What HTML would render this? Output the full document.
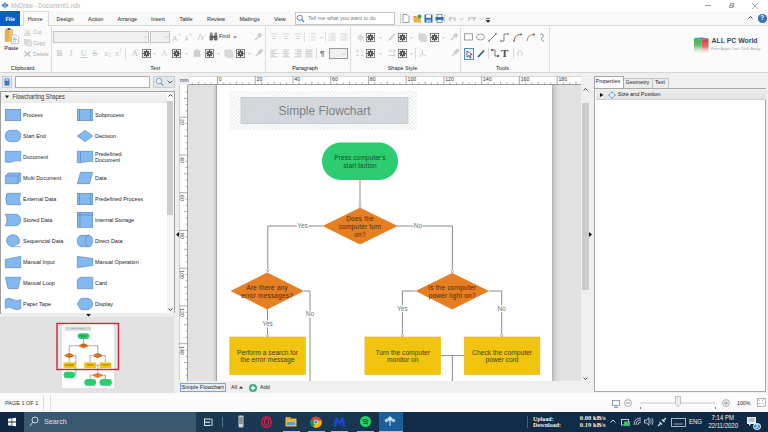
<!DOCTYPE html>
<html><head><meta charset="utf-8">
<style>
*{margin:0;padding:0;box-sizing:border-box}
html,body{width:768px;height:432px;overflow:hidden;background:#efefef;font-family:"Liberation Sans",sans-serif;color:#333;position:relative}
.a{position:absolute}
.t{position:absolute;white-space:nowrap;line-height:1}
svg{overflow:visible}
</style></head><body>
<div class="a" style="left:0px;top:0px;width:768px;height:11px;background:#fff"></div>
<svg class="a" style="left:1px;top:1px;" width="9" height="10" viewBox="0 0 9 10"><path d="M4 1.2 L6.2 3.4 L4 5.6 L1.8 3.4Z" fill="#4a7fb4"/><circle cx="2" cy="4.3" r="1.3" fill="#4a80b6"/><circle cx="6" cy="4.3" r="1.3" fill="#4a80b6"/><circle cx="3.2" cy="5.8" r="0.9" fill="#5a8cc0"/><circle cx="4.8" cy="5.8" r="0.9" fill="#5a8cc0"/><circle cx="4" cy="4" r="1" fill="#9cc8ee"/><rect x="3.6" y="6.5" width="0.8" height="2.6" fill="#b8c8d8"/></svg>
<div class="t" style="left:11px;top:2.60px;font-size:6px;color:#b4b4b4;font-weight:normal;transform:scaleY(1.12);transform-origin:0 60%;">MyDraw - Document1.ndx</div>
<div class="a" style="left:705px;top:4.6px;width:6px;height:0.7px;background:#9a9a9a"></div>
<div class="a" style="left:730.2px;top:3.3px;width:3.8px;height:3.8px;border:0.7px solid #9a9a9a"></div>
<div class="a" style="left:729px;top:4.5px;width:3.8px;height:3.8px;border:0.7px solid #9a9a9a;background:#fff"></div>
<svg class="a" style="left:752px;top:3px;" width="6" height="6" viewBox="0 0 6 6"><path d="M0 0L6 6M6 0L0 6" stroke="#8a8a8a" stroke-width="0.7"/></svg>
<div class="a" style="left:0px;top:11px;width:768px;height:14px;background:#f8f8f8"></div>
<div class="a" style="left:0px;top:25px;width:768px;height:1px;background:#d9d9d9"></div>
<div class="a" style="left:0px;top:11px;width:20px;height:15px;background:#0a5ec8"></div>
<div class="t" style="left:5.5px;top:16.65px;font-size:5.5px;color:#fff;font-weight:bold;transform:scaleY(1.12);transform-origin:0 60%;">File</div>
<div class="a" style="left:23px;top:11px;width:26px;height:15px;background:#fbfbfb;border:1px solid #d9d9d9;border-bottom:none"></div>
<div class="t" style="left:27.8px;top:16.85px;font-size:5.5px;color:#1e1e1e;font-weight:normal;transform:scaleY(1.12);transform-origin:0 60%;">Home</div>
<div class="t" style="left:56.5px;top:16.85px;font-size:5.5px;color:#1e1e1e;font-weight:normal;transform:scaleY(1.12);transform-origin:0 60%;">Design</div>
<div class="t" style="left:88px;top:16.85px;font-size:5.5px;color:#1e1e1e;font-weight:normal;transform:scaleY(1.12);transform-origin:0 60%;">Action</div>
<div class="t" style="left:117.5px;top:16.85px;font-size:5.5px;color:#1e1e1e;font-weight:normal;transform:scaleY(1.12);transform-origin:0 60%;">Arrange</div>
<div class="t" style="left:151px;top:16.85px;font-size:5.5px;color:#1e1e1e;font-weight:normal;transform:scaleY(1.12);transform-origin:0 60%;">Insert</div>
<div class="t" style="left:179.5px;top:16.85px;font-size:5.5px;color:#1e1e1e;font-weight:normal;transform:scaleY(1.12);transform-origin:0 60%;">Table</div>
<div class="t" style="left:207px;top:16.85px;font-size:5.5px;color:#1e1e1e;font-weight:normal;transform:scaleY(1.12);transform-origin:0 60%;">Review</div>
<div class="t" style="left:239.5px;top:16.85px;font-size:5.5px;color:#1e1e1e;font-weight:normal;transform:scaleY(1.12);transform-origin:0 60%;">Mailings</div>
<div class="t" style="left:274px;top:16.85px;font-size:5.5px;color:#1e1e1e;font-weight:normal;transform:scaleY(1.12);transform-origin:0 60%;">View</div>
<div class="a" style="left:295px;top:12px;width:100px;height:13px;background:#fff;border:1px solid #c6c6c6"></div>
<svg class="a" style="left:296px;top:14px;" width="9" height="9" viewBox="0 0 9 9"><circle cx="3.8" cy="3.8" r="2.6" fill="none" stroke="#4a7aa8" stroke-width="0.9"/><path d="M5.7 5.7 L8 8" stroke="#4a7aa8" stroke-width="1.1"/></svg>
<div class="t" style="left:308px;top:16.25px;font-size:5.5px;color:#7a7a7a;font-weight:normal;transform:scaleY(1.12);transform-origin:0 60%;">Tell me what you want to do</div>
<div class="a" style="left:399.5px;top:14px;width:0.7px;height:9px;background:#ccc"></div>
<div class="a" style="left:444px;top:14px;width:0.7px;height:9px;background:#ccc"></div>
<svg class="a" style="left:402px;top:14px;" width="8" height="9" viewBox="0 0 8 9"><path d="M1 0.5H5L7 2.5V8.5H1Z" fill="#fff" stroke="#777" stroke-width="0.7"/></svg>
<svg class="a" style="left:413px;top:14px;" width="9" height="9" viewBox="0 0 9 9"><rect x="0.5" y="3" width="7.5" height="5.5" fill="#e8b44a"/><rect x="0.5" y="2" width="3" height="1.5" fill="#d89a30"/><circle cx="6.5" cy="2.5" r="2" fill="#3aa070"/></svg>
<svg class="a" style="left:424px;top:14px;" width="9" height="9" viewBox="0 0 9 9"><rect x="0.5" y="0.5" width="8" height="8" fill="#2d6cb4"/><rect x="2" y="0.8" width="5" height="3" fill="#fff"/><rect x="2.2" y="5.5" width="4.6" height="3" fill="#a9c6e6"/></svg>
<svg class="a" style="left:435px;top:14px;" width="9" height="9" viewBox="0 0 9 9"><rect x="2" y="0.5" width="5" height="3" fill="#fff" stroke="#2d6cb4" stroke-width="0.7"/><rect x="0.5" y="3" width="8" height="3.5" fill="#2d6cb4"/><rect x="2" y="5.5" width="5" height="3" fill="#fff" stroke="#2d6cb4" stroke-width="0.7"/></svg>
<svg class="a" style="left:448px;top:15px;" width="9" height="8" viewBox="0 0 9 8"><path d="M2 6 V3 H7 V6" fill="none" stroke="#bbb" stroke-width="1.2"/><path d="M0.5 3.5 L2 1.5 L3.5 3.5" fill="#bbb"/></svg>
<svg class="a" style="left:459px;top:17px;" width="5" height="4" viewBox="0 0 5 4"><path d="M0.5 1 L2.5 3 L4.5 1" fill="none" stroke="#bbb" stroke-width="0.8"/></svg>
<svg class="a" style="left:468px;top:15px;" width="9" height="8" viewBox="0 0 9 8"><path d="M1 6 V3 H6 V6" fill="none" stroke="#bbb" stroke-width="1.2"/><path d="M5 3.5 L7 1.5 L8.5 3.5" fill="#bbb"/></svg>
<svg class="a" style="left:479px;top:17px;" width="5" height="4" viewBox="0 0 5 4"><path d="M0.5 1 L2.5 3 L4.5 1" fill="none" stroke="#bbb" stroke-width="0.8"/></svg>
<svg class="a" style="left:485px;top:18px;" width="6" height="6" viewBox="0 0 6 6"><rect x="1" y="0" width="4" height="0.8" fill="#444"/><path d="M0.5 2 H5.5 L3 5Z" fill="#333"/></svg>
<svg class="a" style="left:748px;top:16px;" width="5" height="3" viewBox="0 0 5 3"><path d="M0.5 2.5 L2.5 0.5 L4.5 2.5" fill="none" stroke="#333" stroke-width="0.9"/></svg>
<div class="a" style="left:758px;top:14.3px;width:8.5px;height:8.5px;border-radius:50%;background:#3a72b0"></div>
<div class="t" style="left:662.3px;width:200px;text-align:center;top:15.35px;font-size:6.5px;color:#fff;font-weight:bold;">?</div>
<div class="a" style="left:0px;top:26px;width:768px;height:46px;background:#fbfbfb"></div>
<div class="a" style="left:0px;top:72px;width:768px;height:1px;background:#d6d6d6"></div>
<div class="a" style="left:51px;top:27px;width:0.8px;height:44.5px;background:#dcdcdc"></div>
<div class="a" style="left:265px;top:27px;width:0.8px;height:44.5px;background:#dcdcdc"></div>
<div class="a" style="left:350px;top:27px;width:0.8px;height:44.5px;background:#dcdcdc"></div>
<div class="a" style="left:460px;top:27px;width:0.8px;height:44.5px;background:#dcdcdc"></div>
<div class="a" style="left:549px;top:27px;width:0.8px;height:44.5px;background:#dcdcdc"></div>
<div class="t" style="left:-77.4px;width:200px;text-align:center;top:66.05px;font-size:5.5px;color:#1a1a1a;font-weight:normal;transform:scaleY(1.12);transform-origin:0 60%;">Clipboard</div>
<div class="t" style="left:55.30000000000001px;width:200px;text-align:center;top:66.05px;font-size:5.5px;color:#1a1a1a;font-weight:normal;transform:scaleY(1.12);transform-origin:0 60%;">Text</div>
<div class="t" style="left:205px;width:200px;text-align:center;top:66.05px;font-size:5.5px;color:#1a1a1a;font-weight:normal;transform:scaleY(1.12);transform-origin:0 60%;">Paragraph</div>
<div class="t" style="left:302.5px;width:200px;text-align:center;top:66.05px;font-size:5.5px;color:#1a1a1a;font-weight:normal;transform:scaleY(1.12);transform-origin:0 60%;">Shape Style</div>
<div class="t" style="left:402.5px;width:200px;text-align:center;top:66.05px;font-size:5.5px;color:#1a1a1a;font-weight:normal;transform:scaleY(1.12);transform-origin:0 60%;">Tools</div>
<svg class="a" style="left:4px;top:28px;" width="16" height="17" viewBox="0 0 16 17"><rect x="0.8" y="1.2" width="8" height="12.5" fill="#e6ae48"/><rect x="5" y="1.2" width="3.8" height="12.5" fill="#f0c470"/><rect x="3.3" y="0" width="3.2" height="2" rx="0.8" fill="#555"/><path d="M7.4 7 H12.4 L14.7 9.3 V15.5 H7.4Z" fill="#fff" stroke="#8a94a4" stroke-width="0.6"/><path d="M8.8 10H12.5M8.8 11.6H13M8.8 13.2H12" stroke="#6a9ad0" stroke-width="0.7"/></svg>
<div class="t" style="left:-88.7px;width:200px;text-align:center;top:45.85px;font-size:5.5px;color:#111;font-weight:normal;transform:scaleY(1.12);transform-origin:0 60%;">Paste</div>
<svg class="a" style="left:24px;top:29px;" width="7" height="7" viewBox="0 0 7 7"><path d="M1 0.5 L5 5 M6 0.5 L2 5" stroke="#bbb" stroke-width="0.8"/><circle cx="1.8" cy="5.5" r="1.2" fill="none" stroke="#bbb" stroke-width="0.7"/><circle cx="5.2" cy="5.5" r="1.2" fill="none" stroke="#bbb" stroke-width="0.7"/></svg>
<div class="t" style="left:33px;top:30.05px;font-size:5.5px;color:#a8a8a8;font-weight:normal;transform:scaleY(1.12);transform-origin:0 60%;">Cut</div>
<svg class="a" style="left:24px;top:39px;" width="8" height="7" viewBox="0 0 8 7"><rect x="0.5" y="0.5" width="5" height="5" fill="#ddd" stroke="#c8c8c8" stroke-width="0.6"/><rect x="2.5" y="2" width="5" height="5" fill="#e4e4e4" stroke="#c8c8c8" stroke-width="0.6"/></svg>
<div class="t" style="left:33px;top:40.95px;font-size:5.5px;color:#a8a8a8;font-weight:normal;transform:scaleY(1.12);transform-origin:0 60%;">Copy</div>
<svg class="a" style="left:24px;top:51px;" width="7" height="6" viewBox="0 0 7 6"><path d="M0.5 0.5 L6.5 5.5 M6.5 0.5 L0.5 5.5" stroke="#bbb" stroke-width="1.1"/></svg>
<div class="t" style="left:33px;top:51.95px;font-size:5.5px;color:#a8a8a8;font-weight:normal;transform:scaleY(1.12);transform-origin:0 60%;">Delete</div>
<div class="a" style="left:53px;top:31px;width:96px;height:12px;background:#f0f0f0;border:1px solid #c4c4c4"></div>
<svg class="a" style="left:143px;top:35px;" width="5" height="4" viewBox="0 0 5 4"><path d="M0.5 0.8 L2.5 2.8 L4.5 0.8" fill="none" stroke="#bbb" stroke-width="0.8"/></svg>
<div class="a" style="left:150px;top:31px;width:20px;height:12px;background:#f0f0f0;border:1px solid #c4c4c4"></div>
<svg class="a" style="left:164px;top:35px;" width="5" height="4" viewBox="0 0 5 4"><path d="M0.5 0.8 L2.5 2.8 L4.5 0.8" fill="none" stroke="#bbb" stroke-width="0.8"/></svg>
<div class="t" style="left:172.5px;top:34.50px;font-size:7px;color:#c4c4c4;font-weight:normal;">A</div>
<svg class="a" style="left:178px;top:33px;" width="3" height="3" viewBox="0 0 3 3"><path d="M0 2.5 L1.5 0.5 L3 2.5" fill="none" stroke="#c4c4c4" stroke-width="0.7"/></svg>
<div class="t" style="left:184.5px;top:35.50px;font-size:6px;color:#c4c4c4;font-weight:normal;transform:scaleY(1.12);transform-origin:0 60%;">A</div>
<svg class="a" style="left:189px;top:33px;" width="3" height="3" viewBox="0 0 3 3"><path d="M0 0.5 L1.5 2.5 L3 0.5" fill="none" stroke="#c4c4c4" stroke-width="0.7"/></svg>
<svg class="a" style="left:197px;top:33px;" width="8" height="8" viewBox="0 0 8 8"><path d="M1 7 L3.5 1 L6 7" fill="none" stroke="#d0d0d0" stroke-width="1"/><path d="M4 6 L7.5 3" stroke="#e0c0c0" stroke-width="1"/></svg>
<svg class="a" style="left:209px;top:32px;" width="9" height="9" viewBox="0 0 9 9"><rect x="0.5" y="3" width="3.5" height="5.5" rx="1" fill="#666"/><rect x="5" y="3" width="3.5" height="5.5" rx="1" fill="#666"/><rect x="1" y="0.5" width="2.5" height="3" fill="#888"/><rect x="5.5" y="0.5" width="2.5" height="3" fill="#888"/><rect x="3.5" y="4" width="2" height="2" fill="#555"/></svg>
<div class="t" style="left:219px;top:34.45px;font-size:5.5px;color:#2a2a2a;font-weight:normal;transform:scaleY(1.12);transform-origin:0 60%;">Find</div>
<svg class="a" style="left:232.5px;top:36px;" width="4" height="3" viewBox="0 0 4 3"><path d="M0 0.5 H4 L2 2.5Z" fill="#777"/></svg>
<svg class="a" style="left:254px;top:33px;" width="8" height="8" viewBox="0 0 8 8"><path d="M1 7 L5 3 M4 2 L6 0.5 L7.5 2 L6 4Z" stroke="#c8c8c8" stroke-width="1.2" fill="#d8d8d8"/></svg>
<div class="t" style="left:56.5px;top:49.30px;font-size:9px;color:#c8c8c8;font-weight:normal;font-family:Liberation Serif;font-weight:bold">B</div>
<div class="t" style="left:69.5px;top:49.30px;font-size:9px;color:#c8c8c8;font-weight:normal;font-family:Liberation Serif;font-style:italic;font-family:Liberation Serif">I</div>
<div class="t" style="left:80.5px;top:49.30px;font-size:9px;color:#c8c8c8;font-weight:normal;font-family:Liberation Serif;text-decoration:underline">U</div>
<div class="t" style="left:92.5px;top:49.30px;font-size:9px;color:#c8c8c8;font-weight:normal;font-family:Liberation Serif;text-decoration:line-through">S</div>
<div class="t" style="left:104px;top:49.30px;font-size:9px;color:#c8c8c8;font-weight:normal;font-family:Liberation Serif;">x</div>
<div class="t" style="left:115px;top:49.30px;font-size:9px;color:#c8c8c8;font-weight:normal;font-family:Liberation Serif;">x</div>
<div class="t" style="left:108.5px;top:54.00px;font-size:4px;color:#c8c8c8;font-weight:normal;transform:scaleY(1.12);transform-origin:0 60%;">2</div>
<div class="t" style="left:119.5px;top:48.50px;font-size:4px;color:#c8c8c8;font-weight:normal;transform:scaleY(1.12);transform-origin:0 60%;">2</div>
<div class="a" style="left:125px;top:48px;width:0.8px;height:11px;background:#dadada"></div>
<div class="t" style="left:131.5px;top:49.00px;font-size:9px;color:#c0c0c0;font-weight:normal;font-family:Liberation Serif">A</div>
<svg class="a" style="left:141.5px;top:49px;" width="9" height="9" viewBox="0 0 9 9"><rect x="0.5" y="0.5" width="8" height="8" fill="#f6f6f6" stroke="#7a7a7a" stroke-width="0.9"/><g fill="#3a3a3a"><rect x="3.9" y="1.2000000000000002" width="1.2" height="6.6" transform="rotate(0 4.5 4.5)"/><rect x="3.9" y="1.2000000000000002" width="1.2" height="6.6" transform="rotate(45 4.5 4.5)"/><rect x="3.9" y="1.2000000000000002" width="1.2" height="6.6" transform="rotate(90 4.5 4.5)"/><rect x="3.9" y="1.2000000000000002" width="1.2" height="6.6" transform="rotate(135 4.5 4.5)"/><circle cx="4.5" cy="4.5" r="2.3"/></g><circle cx="4.5" cy="4.5" r="0.9" fill="#ddd"/></svg>
<svg class="a" style="left:153px;top:53px;" width="3" height="2" viewBox="0 0 3 2"><path d="M0 0 H3 L1.5 1.8Z" fill="#c4c4c4"/></svg>
<div class="t" style="left:161px;top:49.00px;font-size:9px;color:#d0d0d0;font-weight:normal;font-family:Liberation Serif">A</div>
<svg class="a" style="left:172px;top:49px;" width="9" height="9" viewBox="0 0 9 9"><rect x="0.5" y="0.5" width="8" height="8" fill="#f6f6f6" stroke="#7a7a7a" stroke-width="0.9"/><g fill="#3a3a3a"><rect x="3.9" y="1.2000000000000002" width="1.2" height="6.6" transform="rotate(0 4.5 4.5)"/><rect x="3.9" y="1.2000000000000002" width="1.2" height="6.6" transform="rotate(45 4.5 4.5)"/><rect x="3.9" y="1.2000000000000002" width="1.2" height="6.6" transform="rotate(90 4.5 4.5)"/><rect x="3.9" y="1.2000000000000002" width="1.2" height="6.6" transform="rotate(135 4.5 4.5)"/><circle cx="4.5" cy="4.5" r="2.3"/></g><circle cx="4.5" cy="4.5" r="0.9" fill="#ddd"/></svg>
<svg class="a" style="left:184.5px;top:53px;" width="3" height="2" viewBox="0 0 3 2"><path d="M0 0 H3 L1.5 1.8Z" fill="#c4c4c4"/></svg>
<svg class="a" style="left:193px;top:49px;" width="8" height="9" viewBox="0 0 8 9"><path d="M1 8 V2 L4 0.5 L7 2 V8" fill="#d0d0d0" stroke="#c4c4c4" stroke-width="0.6"/></svg>
<svg class="a" style="left:204.5px;top:49px;" width="9" height="9" viewBox="0 0 9 9"><rect x="0.5" y="0.5" width="8" height="8" fill="#f6f6f6" stroke="#7a7a7a" stroke-width="0.9"/><g fill="#3a3a3a"><rect x="3.9" y="1.2000000000000002" width="1.2" height="6.6" transform="rotate(0 4.5 4.5)"/><rect x="3.9" y="1.2000000000000002" width="1.2" height="6.6" transform="rotate(45 4.5 4.5)"/><rect x="3.9" y="1.2000000000000002" width="1.2" height="6.6" transform="rotate(90 4.5 4.5)"/><rect x="3.9" y="1.2000000000000002" width="1.2" height="6.6" transform="rotate(135 4.5 4.5)"/><circle cx="4.5" cy="4.5" r="2.3"/></g><circle cx="4.5" cy="4.5" r="0.9" fill="#ddd"/></svg>
<svg class="a" style="left:216.5px;top:53px;" width="3" height="2" viewBox="0 0 3 2"><path d="M0 0 H3 L1.5 1.8Z" fill="#c4c4c4"/></svg>
<svg class="a" style="left:224px;top:49px;" width="10" height="9" viewBox="0 0 10 9"><rect x="0.5" y="0.5" width="7" height="7" fill="#d4d4d4"/><rect x="2.5" y="2" width="7" height="7" fill="#dadada"/></svg>
<svg class="a" style="left:236px;top:49px;" width="9" height="9" viewBox="0 0 9 9"><rect x="0.5" y="0.5" width="8" height="8" fill="#f6f6f6" stroke="#7a7a7a" stroke-width="0.9"/><g fill="#3a3a3a"><rect x="3.9" y="1.2000000000000002" width="1.2" height="6.6" transform="rotate(0 4.5 4.5)"/><rect x="3.9" y="1.2000000000000002" width="1.2" height="6.6" transform="rotate(45 4.5 4.5)"/><rect x="3.9" y="1.2000000000000002" width="1.2" height="6.6" transform="rotate(90 4.5 4.5)"/><rect x="3.9" y="1.2000000000000002" width="1.2" height="6.6" transform="rotate(135 4.5 4.5)"/><circle cx="4.5" cy="4.5" r="2.3"/></g><circle cx="4.5" cy="4.5" r="0.9" fill="#ddd"/></svg>
<svg class="a" style="left:248px;top:53px;" width="3" height="2" viewBox="0 0 3 2"><path d="M0 0 H3 L1.5 1.8Z" fill="#c4c4c4"/></svg>
<svg class="a" style="left:254.5px;top:49px;" width="8" height="8" viewBox="0 0 8 8"><path d="M1 7 L4 4 M3.5 3 L6.5 0.5 L7.5 1.5 L5 4.5Z" stroke="#c8c8c8" stroke-width="1.3" fill="#d4d4d4"/></svg>
<svg class="a" style="left:270px;top:33px;" width="8" height="8" viewBox="0 0 8 8"><path d="M0.5 1H7.5M2 3.5H6M2 5.5H6" stroke="#d4d4d4" stroke-width="0.9"/></svg>
<svg class="a" style="left:282px;top:33px;" width="8" height="8" viewBox="0 0 8 8"><path d="M0.5 1H7.5M2 3.5H6M2 5.5H6" stroke="#d4d4d4" stroke-width="0.9"/></svg>
<svg class="a" style="left:294px;top:33px;" width="8" height="8" viewBox="0 0 8 8"><path d="M0.5 1H7.5M2 3.5H6M2 5.5H6" stroke="#d4d4d4" stroke-width="0.9"/></svg>
<div class="a" style="left:303.5px;top:32px;width:0.8px;height:10px;background:#e0e0e0"></div>
<svg class="a" style="left:308px;top:33px;" width="8" height="8" viewBox="0 0 8 8"><path d="M0.5 1H1.5M3 1H7.5M0.5 4H1.5M3 4H7.5M0.5 7H1.5M3 7H7.5" stroke="#d0d0d0" stroke-width="0.9"/></svg>
<svg class="a" style="left:319.5px;top:37px;" width="3" height="2" viewBox="0 0 3 2"><path d="M0 0 H3 L1.5 1.8Z" fill="#c4c4c4"/></svg>
<div class="a" style="left:324.5px;top:32px;width:0.8px;height:10px;background:#e0e0e0"></div>
<svg class="a" style="left:328px;top:33px;" width="8" height="8" viewBox="0 0 8 8"><path d="M0.5 1H7.5M3 3H7.5M3 5H7.5M0.5 7H7.5M0.5 3L2 4L0.5 5" stroke="#d0d0d0" stroke-width="0.9" fill="none"/></svg>
<svg class="a" style="left:340px;top:33px;" width="8" height="8" viewBox="0 0 8 8"><path d="M0.5 1H7.5M3 3H7.5M3 5H7.5M0.5 7H7.5M0.5 3L2 4L0.5 5" stroke="#d0d0d0" stroke-width="0.9" fill="none"/></svg>
<svg class="a" style="left:270px;top:49px;" width="8" height="9" viewBox="0 0 8 9"><path d="M0.5 1H7.5M0.5 2.7H5M0.5 4.4H7.5M0.5 6.1H5M0.5 7.8H7.5" stroke="#c4c4c4" stroke-width="0.9"/></svg>
<svg class="a" style="left:282px;top:49px;" width="8" height="9" viewBox="0 0 8 9"><path d="M0.5 1H7.5M1.8 2.7H6.2M0.5 4.4H7.5M1.8 6.1H6.2M0.5 7.8H7.5" stroke="#c4c4c4" stroke-width="0.9"/></svg>
<svg class="a" style="left:294px;top:49px;" width="8" height="9" viewBox="0 0 8 9"><path d="M0.5 1H7.5M3 2.7H7.5M0.5 4.4H7.5M3 6.1H7.5M0.5 7.8H7.5" stroke="#c4c4c4" stroke-width="0.9"/></svg>
<svg class="a" style="left:305px;top:49px;" width="8" height="9" viewBox="0 0 8 9"><path d="M0.5 1H7.5M0.5 2.7H7.5M0.5 4.4H7.5M0.5 6.1H7.5M0.5 7.8H7.5" stroke="#c4c4c4" stroke-width="0.9"/></svg>
<div class="a" style="left:315.5px;top:48px;width:0.8px;height:11px;background:#dadada"></div>
<div class="t" style="left:320px;top:49.50px;font-size:8px;color:#6a6a6a;font-weight:bold;">¶</div>
<div class="a" style="left:329px;top:48px;width:19px;height:11px;background:#f0f0f0;border:1px solid #9a9a9a"></div>
<svg class="a" style="left:341px;top:52px;" width="5" height="4" viewBox="0 0 5 4"><path d="M0.5 0.8 L2.5 2.8 L4.5 0.8" fill="none" stroke="#c4c4c4" stroke-width="0.8"/></svg>
<svg class="a" style="left:355.5px;top:33px;" width="9" height="9" viewBox="0 0 9 9"><path d="M1 4.5 L4.5 1 L8 4.5 L4.5 8Z" fill="#dadada"/><path d="M7 6 Q8 8 7 8.5" stroke="#e4c8c8" fill="none"/></svg>
<svg class="a" style="left:366px;top:32.5px;" width="9" height="9" viewBox="0 0 9 9"><rect x="0.5" y="0.5" width="8" height="8" fill="#f6f6f6" stroke="#7a7a7a" stroke-width="0.9"/><g fill="#3a3a3a"><rect x="3.9" y="1.2000000000000002" width="1.2" height="6.6" transform="rotate(0 4.5 4.5)"/><rect x="3.9" y="1.2000000000000002" width="1.2" height="6.6" transform="rotate(45 4.5 4.5)"/><rect x="3.9" y="1.2000000000000002" width="1.2" height="6.6" transform="rotate(90 4.5 4.5)"/><rect x="3.9" y="1.2000000000000002" width="1.2" height="6.6" transform="rotate(135 4.5 4.5)"/><circle cx="4.5" cy="4.5" r="2.3"/></g><circle cx="4.5" cy="4.5" r="0.9" fill="#ddd"/></svg>
<svg class="a" style="left:378.5px;top:37px;" width="3" height="2" viewBox="0 0 3 2"><path d="M0 0 H3 L1.5 1.8Z" fill="#c4c4c4"/></svg>
<svg class="a" style="left:387.5px;top:33px;" width="9" height="8" viewBox="0 0 9 8"><path d="M1 7 L7 1" stroke="#d4d4d4" stroke-width="2"/><path d="M0.5 7.5 L2 6" stroke="#c8c8c8"/></svg>
<svg class="a" style="left:398px;top:32.5px;" width="9" height="9" viewBox="0 0 9 9"><rect x="0.5" y="0.5" width="8" height="8" fill="#f6f6f6" stroke="#7a7a7a" stroke-width="0.9"/><g fill="#3a3a3a"><rect x="3.9" y="1.2000000000000002" width="1.2" height="6.6" transform="rotate(0 4.5 4.5)"/><rect x="3.9" y="1.2000000000000002" width="1.2" height="6.6" transform="rotate(45 4.5 4.5)"/><rect x="3.9" y="1.2000000000000002" width="1.2" height="6.6" transform="rotate(90 4.5 4.5)"/><rect x="3.9" y="1.2000000000000002" width="1.2" height="6.6" transform="rotate(135 4.5 4.5)"/><circle cx="4.5" cy="4.5" r="2.3"/></g><circle cx="4.5" cy="4.5" r="0.9" fill="#ddd"/></svg>
<svg class="a" style="left:410px;top:37px;" width="3" height="2" viewBox="0 0 3 2"><path d="M0 0 H3 L1.5 1.8Z" fill="#c4c4c4"/></svg>
<svg class="a" style="left:418px;top:33px;" width="9" height="9" viewBox="0 0 9 9"><rect x="0.5" y="0.5" width="7" height="7" rx="1" fill="#d2d2d2"/><rect x="2" y="2" width="7" height="7" rx="1" fill="#d8d8d8"/></svg>
<svg class="a" style="left:429.5px;top:32.5px;" width="9" height="9" viewBox="0 0 9 9"><rect x="0.5" y="0.5" width="8" height="8" fill="#f6f6f6" stroke="#7a7a7a" stroke-width="0.9"/><g fill="#3a3a3a"><rect x="3.9" y="1.2000000000000002" width="1.2" height="6.6" transform="rotate(0 4.5 4.5)"/><rect x="3.9" y="1.2000000000000002" width="1.2" height="6.6" transform="rotate(45 4.5 4.5)"/><rect x="3.9" y="1.2000000000000002" width="1.2" height="6.6" transform="rotate(90 4.5 4.5)"/><rect x="3.9" y="1.2000000000000002" width="1.2" height="6.6" transform="rotate(135 4.5 4.5)"/><circle cx="4.5" cy="4.5" r="2.3"/></g><circle cx="4.5" cy="4.5" r="0.9" fill="#ddd"/></svg>
<svg class="a" style="left:442px;top:37px;" width="3" height="2" viewBox="0 0 3 2"><path d="M0 0 H3 L1.5 1.8Z" fill="#c4c4c4"/></svg>
<svg class="a" style="left:450px;top:33px;" width="8" height="8" viewBox="0 0 8 8"><path d="M1 7 L5 3 M4 2 L6 0.5 L7.5 2 L6 4Z" stroke="#c8c8c8" stroke-width="1.2" fill="#d8d8d8"/></svg>
<svg class="a" style="left:356px;top:49px;" width="8" height="9" viewBox="0 0 8 9"><path d="M0.5 2H3M5 2H7.5M0.5 6.5H3M5 6.5H7.5" stroke="#ccc" stroke-width="0.9"/><circle cx="1.5" cy="2" r="1" fill="#ccc"/><circle cx="1.5" cy="6.5" r="1" fill="#ccc"/></svg>
<svg class="a" style="left:366px;top:49px;" width="9" height="9" viewBox="0 0 9 9"><rect x="0.5" y="0.5" width="8" height="8" fill="#f6f6f6" stroke="#7a7a7a" stroke-width="0.9"/><g fill="#3a3a3a"><rect x="3.9" y="1.2000000000000002" width="1.2" height="6.6" transform="rotate(0 4.5 4.5)"/><rect x="3.9" y="1.2000000000000002" width="1.2" height="6.6" transform="rotate(45 4.5 4.5)"/><rect x="3.9" y="1.2000000000000002" width="1.2" height="6.6" transform="rotate(90 4.5 4.5)"/><rect x="3.9" y="1.2000000000000002" width="1.2" height="6.6" transform="rotate(135 4.5 4.5)"/><circle cx="4.5" cy="4.5" r="2.3"/></g><circle cx="4.5" cy="4.5" r="0.9" fill="#ddd"/></svg>
<svg class="a" style="left:378.5px;top:53px;" width="3" height="2" viewBox="0 0 3 2"><path d="M0 0 H3 L1.5 1.8Z" fill="#c4c4c4"/></svg>
<svg class="a" style="left:388px;top:49px;" width="8" height="9" viewBox="0 0 8 9"><path d="M0.5 2H7M0.5 6.5H7" stroke="#ccc" stroke-width="0.9"/><path d="M5.5 0.5L7.5 2L5.5 3.5M5.5 5L7.5 6.5L5.5 8" fill="none" stroke="#ccc" stroke-width="0.8"/></svg>
<svg class="a" style="left:398px;top:49px;" width="9" height="9" viewBox="0 0 9 9"><rect x="0.5" y="0.5" width="8" height="8" fill="#f6f6f6" stroke="#7a7a7a" stroke-width="0.9"/><g fill="#3a3a3a"><rect x="3.9" y="1.2000000000000002" width="1.2" height="6.6" transform="rotate(0 4.5 4.5)"/><rect x="3.9" y="1.2000000000000002" width="1.2" height="6.6" transform="rotate(45 4.5 4.5)"/><rect x="3.9" y="1.2000000000000002" width="1.2" height="6.6" transform="rotate(90 4.5 4.5)"/><rect x="3.9" y="1.2000000000000002" width="1.2" height="6.6" transform="rotate(135 4.5 4.5)"/><circle cx="4.5" cy="4.5" r="2.3"/></g><circle cx="4.5" cy="4.5" r="0.9" fill="#ddd"/></svg>
<svg class="a" style="left:410px;top:53px;" width="3" height="2" viewBox="0 0 3 2"><path d="M0 0 H3 L1.5 1.8Z" fill="#c4c4c4"/></svg>
<div class="a" style="left:415px;top:48px;width:0.8px;height:11px;background:#dadada"></div>
<svg class="a" style="left:418px;top:49px;" width="9" height="9" viewBox="0 0 9 9"><path d="M4.5 1 V5 L1 8 M4.5 5 L8 7" stroke="#c8c8c8" stroke-width="0.9" fill="none"/></svg>
<svg class="a" style="left:450.5px;top:49px;" width="8" height="8" viewBox="0 0 8 8"><path d="M1 7 L4 4 M3.5 3 L6.5 0.5 L7.5 1.5 L5 4.5Z" stroke="#c8c8c8" stroke-width="1.3" fill="#d4d4d4"/></svg>
<svg class="a" style="left:464px;top:33px;" width="9" height="8" viewBox="0 0 9 8"><rect x="0.5" y="0.8" width="8" height="6.2" fill="none" stroke="#8a8a8a" stroke-width="0.8"/></svg>
<svg class="a" style="left:476px;top:33px;" width="9" height="8" viewBox="0 0 9 8"><ellipse cx="4.5" cy="4" rx="4" ry="3" fill="none" stroke="#8a8a8a" stroke-width="0.8"/></svg>
<svg class="a" style="left:488px;top:33px;" width="9" height="9" viewBox="0 0 9 9"><path d="M1 8 L8 1" stroke="#777" stroke-width="0.9"/><circle cx="1" cy="8" r="0.8" fill="#555"/><circle cx="8" cy="1" r="0.8" fill="#555"/></svg>
<svg class="a" style="left:500px;top:33px;" width="9" height="9" viewBox="0 0 9 9"><path d="M1 8 H4 V1 H8" fill="none" stroke="#777" stroke-width="0.9"/><circle cx="1" cy="8" r="0.8" fill="#555"/><circle cx="8" cy="1" r="0.8" fill="#555"/></svg>
<svg class="a" style="left:513px;top:33px;" width="9" height="9" viewBox="0 0 9 9"><path d="M1 8 Q2 1 8 1.5" fill="none" stroke="#c0504d" stroke-width="1"/><circle cx="8" cy="1.5" r="0.9" fill="#555"/><circle cx="1" cy="8" r="0.8" fill="#555"/></svg>
<svg class="a" style="left:526px;top:33px;" width="9" height="9" viewBox="0 0 9 9"><path d="M1 8 Q2 1 8 1.5" fill="none" stroke="#d08060" stroke-width="1"/><circle cx="8" cy="1.5" r="0.9" fill="#555"/></svg>
<svg class="a" style="left:539px;top:33px;" width="6" height="9" viewBox="0 0 6 9"><path d="M1.5 1 Q5 1 4.5 3.5 Q2 5 2.5 7 Q3 8 5 8" fill="none" stroke="#8a8a8a" stroke-width="0.9"/></svg>
<div class="a" style="left:463.5px;top:47.5px;width:10.5px;height:12px;background:#e6f0fa;border:1px solid #5a8ac8"></div>
<svg class="a" style="left:465.5px;top:49.5px;" width="7" height="8" viewBox="0 0 7 8"><path d="M1 1 L6 4.5 L3.8 5 L5 7.5 L4 8 L2.8 5.5 L1 7Z" fill="#fff" stroke="#333" stroke-width="0.7"/></svg>
<svg class="a" style="left:477px;top:49px;" width="8" height="9" viewBox="0 0 8 9"><path d="M1 8 L7 1.5" stroke="#2d5f9e" stroke-width="1.8"/></svg>
<div class="a" style="left:487.8px;top:48px;width:0.8px;height:11px;background:#dadada"></div>
<svg class="a" style="left:490.5px;top:49px;" width="8" height="9" viewBox="0 0 8 9"><path d="M1 1 H4 V7 H7.5" fill="none" stroke="#666" stroke-width="0.9"/><rect x="0" y="0" width="2" height="2" fill="#666"/><rect x="6" y="6" width="2" height="2" fill="#666"/></svg>
<div class="t" style="left:501px;top:48.30px;font-size:11px;color:#555;font-weight:bold;font-family:Liberation Serif">T</div>
<div class="a" style="left:513px;top:48px;width:0.8px;height:11px;background:#dadada"></div>
<svg class="a" style="left:516px;top:49px;" width="8" height="9" viewBox="0 0 8 9"><path d="M2 7 V3 Q4 0.5 6 3 V7" fill="none" stroke="#c4c4c4" stroke-width="0.9"/></svg>
<svg class="a" style="left:693px;top:37px;" width="17" height="19" viewBox="0 0 17 19"><defs><linearGradient id="lgG" x1="0" y1="0" x2="0" y2="1"><stop offset="0" stop-color="#3cb04a"/><stop offset="0.45" stop-color="#6cc070"/><stop offset="1" stop-color="#fff" stop-opacity="0"/></linearGradient><linearGradient id="lgR" x1="0" y1="0" x2="0" y2="1"><stop offset="0" stop-color="#d83a3a"/><stop offset="0.5" stop-color="#e07070"/><stop offset="1" stop-color="#fff" stop-opacity="0"/></linearGradient></defs><path d="M1 1.2 L8.5 0.5 L15.5 1.5 L8.5 3Z" fill="#3a8ee0"/><path d="M1 1.2 L8.5 3 V18 L1 16Z" fill="url(#lgG)"/><path d="M15.5 1.5 L8.5 3 V18 L15.5 16Z" fill="url(#lgR)"/></svg>
<div class="t" style="left:711.5px;top:37.75px;font-size:6.9px;color:#3a4858;font-weight:bold;">ALL PC World</div>
<div class="t" style="left:711px;top:47.2px;font-size:4.2px;color:#a4a4a4;font-family:Liberation Sans">Free Apps One Click Away</div>
<div class="a" style="left:2px;top:76px;width:10px;height:12px;background:#e4e8ee;border:1px solid #c8ccd2"></div>
<svg class="a" style="left:4px;top:78px;" width="6" height="8" viewBox="0 0 6 8"><rect x="0.5" y="0.5" width="5" height="7" rx="0.6" fill="#3c78c0"/><rect x="1.5" y="1.2" width="3" height="1.5" fill="#cfe0f4"/></svg>
<div class="a" style="left:15px;top:76px;width:134.8px;height:12px;background:#fff;border:1px solid #adadad"></div>
<div class="a" style="left:153px;top:76px;width:22px;height:12px;background:#e3e6ea;border:1px solid #c9ccd0"></div>
<svg class="a" style="left:155px;top:77px;" width="9" height="10" viewBox="0 0 9 10"><circle cx="4" cy="4" r="2.8" fill="#eef5fc" stroke="#6a90b8" stroke-width="0.8"/><path d="M6 6.2 L8.3 8.6" stroke="#6a90b8" stroke-width="1.1"/></svg>
<svg class="a" style="left:167px;top:80px;" width="6" height="4" viewBox="0 0 6 4"><path d="M0.6 0.8 L3 3 L5.4 0.8" fill="none" stroke="#444" stroke-width="0.9"/></svg>
<div class="a" style="left:0px;top:91px;width:175px;height:223px;background:#fff;border:1px solid #a0a0a0"></div>
<div class="a" style="left:1px;top:92px;width:165.5px;height:11px;background:linear-gradient(#f5f5f5,#ebebeb)"></div>
<svg class="a" style="left:4.8px;top:95.2px;" width="4" height="4" viewBox="0 0 4 4"><path d="M0 0.5 H4 L2 3.5Z" fill="#222"/></svg>
<div class="t" style="left:12.5px;top:94.70px;font-size:5.6px;color:#333;font-weight:normal;transform:scaleY(1.12);transform-origin:0 60%;">Flowcharting Shapes</div>
<div class="a" style="left:166.5px;top:103px;width:7.5px;height:210px;background:#f4f4f4"></div>
<div class="a" style="left:166.5px;top:100.5px;width:6.7px;height:114.3px;background:#cdcdcd"></div>
<svg class="a" style="left:168px;top:94px;" width="5" height="3" viewBox="0 0 5 3"><path d="M0.5 2.5 L2.5 0.5 L4.5 2.5" fill="none" stroke="#333" stroke-width="0.9"/></svg>
<svg class="a" style="left:168px;top:307.5px;" width="5" height="3" viewBox="0 0 5 3"><path d="M0.5 0.5 L2.5 2.5 L4.5 0.5" fill="none" stroke="#333" stroke-width="0.9"/></svg>
<svg class="a" style="left:5px;top:109.3px;" width="16" height="12" viewBox="0 0 16 12"><rect x="0.3" y="0.3" width="15.4" height="11.4" fill="#84b8f0" stroke="#4f7fb8" stroke-width="0.6"/></svg>
<div class="t" style="left:23px;top:112.75px;font-size:5.5px;color:#222;font-weight:normal;transform:scaleY(1.12);transform-origin:0 60%;">Process</div>
<svg class="a" style="left:5px;top:130.3px;" width="16" height="12" viewBox="0 0 16 12"><rect x="0.3" y="0.3" width="15.4" height="11.4" rx="5" fill="#84b8f0" stroke="#4f7fb8" stroke-width="0.6"/></svg>
<div class="t" style="left:23px;top:133.75px;font-size:5.5px;color:#222;font-weight:normal;transform:scaleY(1.12);transform-origin:0 60%;">Start End</div>
<svg class="a" style="left:5px;top:151.3px;" width="16" height="12" viewBox="0 0 16 12"><path d="M0.3 0.3 H15.7 V10 Q12 9 8 10.5 Q4 12 0.3 11 Z" fill="#84b8f0" stroke="#4f7fb8" stroke-width="0.6"/></svg>
<div class="t" style="left:23px;top:154.75px;font-size:5.5px;color:#222;font-weight:normal;transform:scaleY(1.12);transform-origin:0 60%;">Document</div>
<svg class="a" style="left:5px;top:172.3px;" width="16" height="12" viewBox="0 0 16 12"><path d="M0.3 4 L3 1 H15.7 V9 L13 11.7 H0.3Z" fill="#84b8f0" stroke="#4f7fb8" stroke-width="0.6"/><path d="M0.3 4 H13 L15.7 1 M13 4 V11.7" fill="none" stroke="#4f7fb8" stroke-width="0.5"/></svg>
<div class="t" style="left:23px;top:175.75px;font-size:5.5px;color:#222;font-weight:normal;transform:scaleY(1.12);transform-origin:0 60%;">Multi Document</div>
<svg class="a" style="left:5px;top:193.3px;" width="16" height="12" viewBox="0 0 16 12"><path d="M2 0.3 H15.7 Q13 6 15.7 11.7 H2 Q-0.5 6 2 0.3Z" fill="#84b8f0" stroke="#4f7fb8" stroke-width="0.6"/></svg>
<div class="t" style="left:23px;top:196.75px;font-size:5.5px;color:#222;font-weight:normal;transform:scaleY(1.12);transform-origin:0 60%;">External Data</div>
<svg class="a" style="left:5px;top:214.3px;" width="16" height="12" viewBox="0 0 16 12"><path d="M0.3 0.3 H11 A4.7 5.7 0 0 1 11 11.7 H0.3 Q3.8 6 0.3 0.3Z" fill="#84b8f0" stroke="#4f7fb8" stroke-width="0.6"/></svg>
<div class="t" style="left:23px;top:217.75px;font-size:5.5px;color:#222;font-weight:normal;transform:scaleY(1.12);transform-origin:0 60%;">Stored Data</div>
<svg class="a" style="left:5px;top:235.3px;" width="16" height="12" viewBox="0 0 16 12"><path d="M8 11.7 H15.7 M8 11.7 A6.5 6 0 1 1 13 9.5" fill="#84b8f0" stroke="#4f7fb8" stroke-width="0.6"/></svg>
<div class="t" style="left:23px;top:238.75px;font-size:5.5px;color:#222;font-weight:normal;transform:scaleY(1.12);transform-origin:0 60%;">Sequencial Data</div>
<svg class="a" style="left:5px;top:256.3px;" width="16" height="12" viewBox="0 0 16 12"><path d="M0.3 3.5 L15.7 0.3 V11.7 H0.3Z" fill="#84b8f0" stroke="#4f7fb8" stroke-width="0.6"/></svg>
<div class="t" style="left:23px;top:259.75px;font-size:5.5px;color:#222;font-weight:normal;transform:scaleY(1.12);transform-origin:0 60%;">Manual Input</div>
<svg class="a" style="left:5px;top:277.3px;" width="16" height="12" viewBox="0 0 16 12"><path d="M0.3 0.3 H15.7 L13 11.7 H3Z" fill="#84b8f0" stroke="#4f7fb8" stroke-width="0.6"/></svg>
<div class="t" style="left:23px;top:280.75px;font-size:5.5px;color:#222;font-weight:normal;transform:scaleY(1.12);transform-origin:0 60%;">Manual Loop</div>
<svg class="a" style="left:5px;top:298.3px;" width="16" height="12" viewBox="0 0 16 12"><path d="M0.3 1.5 Q4 -1 8 1.5 Q12 4 15.7 1.5 V10.5 Q12 13 8 10.5 Q4 8 0.3 10.5Z" fill="#84b8f0" stroke="#4f7fb8" stroke-width="0.6"/></svg>
<div class="t" style="left:23px;top:301.75px;font-size:5.5px;color:#222;font-weight:normal;transform:scaleY(1.12);transform-origin:0 60%;">Paper Tape</div>
<svg class="a" style="left:77px;top:109.3px;" width="16" height="12" viewBox="0 0 16 12"><rect x="0.3" y="0.3" width="15.4" height="11.4" fill="#84b8f0" stroke="#4f7fb8" stroke-width="0.6"/><path d="M2.5 0.3V11.7M13.5 0.3V11.7" stroke="#4f7fb8" stroke-width="0.6"/></svg>
<div class="t" style="left:95px;top:112.75px;font-size:5.5px;color:#222;font-weight:normal;transform:scaleY(1.12);transform-origin:0 60%;">Subprocess</div>
<svg class="a" style="left:77px;top:130.3px;" width="16" height="12" viewBox="0 0 16 12"><path d="M8 0.3 L15.7 6 L8 11.7 L0.3 6Z" fill="#84b8f0" stroke="#4f7fb8" stroke-width="0.6"/></svg>
<div class="t" style="left:95px;top:133.75px;font-size:5.5px;color:#222;font-weight:normal;transform:scaleY(1.12);transform-origin:0 60%;">Decision</div>
<svg class="a" style="left:77px;top:151.3px;" width="16" height="12" viewBox="0 0 16 12"><path d="M0.3 0.3 H15.7 V10.5 Q12 10 8 11 Q4 12 0.3 11.5 Z" fill="#84b8f0" stroke="#4f7fb8" stroke-width="0.6"/><path d="M3.5 0.3V11.5" stroke="#4f7fb8" stroke-width="0.6"/></svg>
<div class="t" style="left:95px;top:151.95px;font-size:5.5px;color:#222;font-weight:normal;transform:scaleY(1.12);transform-origin:0 60%;">Predefined</div>
<div class="t" style="left:95px;top:158.45px;font-size:5.5px;color:#222;font-weight:normal;transform:scaleY(1.12);transform-origin:0 60%;">Document</div>
<svg class="a" style="left:77px;top:172.3px;" width="16" height="12" viewBox="0 0 16 12"><path d="M3.5 0.3 H15.7 L12.5 11.7 H0.3Z" fill="#84b8f0" stroke="#4f7fb8" stroke-width="0.6"/></svg>
<div class="t" style="left:95px;top:175.75px;font-size:5.5px;color:#222;font-weight:normal;transform:scaleY(1.12);transform-origin:0 60%;">Data</div>
<svg class="a" style="left:77px;top:193.3px;" width="16" height="12" viewBox="0 0 16 12"><rect x="0.3" y="0.3" width="15.4" height="11.4" fill="#84b8f0" stroke="#4f7fb8" stroke-width="0.6"/><path d="M2.5 0.3V11.7M13.5 0.3V11.7" stroke="#4f7fb8" stroke-width="0.6"/></svg>
<div class="t" style="left:95px;top:196.75px;font-size:5.5px;color:#222;font-weight:normal;transform:scaleY(1.12);transform-origin:0 60%;">Predefined Process</div>
<svg class="a" style="left:77px;top:212.3px;" width="16" height="16" viewBox="0 0 16 16"><rect x="0.3" y="0.3" width="15.4" height="15" fill="#84b8f0" stroke="#4f7fb8" stroke-width="0.6"/><path d="M0.3 3H15.7M3 0.3V15.3" stroke="#4f7fb8" stroke-width="0.6"/></svg>
<div class="t" style="left:95px;top:217.75px;font-size:5.5px;color:#222;font-weight:normal;transform:scaleY(1.12);transform-origin:0 60%;">Internal Storage</div>
<svg class="a" style="left:77px;top:235.3px;" width="16" height="12" viewBox="0 0 16 12"><path d="M4 0.3 H12 A3.7 5.7 0 0 1 12 11.7 H4 A3.7 5.7 0 0 1 4 0.3Z" fill="#84b8f0" stroke="#4f7fb8" stroke-width="0.6"/><path d="M12 0.3 A3.7 5.7 0 0 0 12 11.7" fill="none" stroke="#4f7fb8" stroke-width="0.6"/></svg>
<div class="t" style="left:95px;top:238.75px;font-size:5.5px;color:#222;font-weight:normal;transform:scaleY(1.12);transform-origin:0 60%;">Direct Data</div>
<svg class="a" style="left:77px;top:256.3px;" width="16" height="12" viewBox="0 0 16 12"><path d="M0.3 0.3 H15.7 L15.7 11.7 H0.3Z" transform="" fill="none" stroke="none"/><path d="M0.3 0.3 L15.7 2.5 V9.5 L0.3 11.7Z" fill="#84b8f0" stroke="#4f7fb8" stroke-width="0.6"/></svg>
<div class="t" style="left:95px;top:259.75px;font-size:5.5px;color:#222;font-weight:normal;transform:scaleY(1.12);transform-origin:0 60%;">Manual Operation</div>
<svg class="a" style="left:77px;top:277.3px;" width="16" height="12" viewBox="0 0 16 12"><path d="M3 0.3 H15.7 V11.7 H0.3 V3Z" fill="#84b8f0" stroke="#4f7fb8" stroke-width="0.6"/></svg>
<div class="t" style="left:95px;top:280.75px;font-size:5.5px;color:#222;font-weight:normal;transform:scaleY(1.12);transform-origin:0 60%;">Card</div>
<svg class="a" style="left:77px;top:298.3px;" width="16" height="12" viewBox="0 0 16 12"><path d="M4 0.3 H12 Q15.7 3 15.7 6 Q15.7 9 12 11.7 H4 L0.3 6Z" fill="#84b8f0" stroke="#4f7fb8" stroke-width="0.6"/></svg>
<div class="t" style="left:95px;top:301.75px;font-size:5.5px;color:#222;font-weight:normal;transform:scaleY(1.12);transform-origin:0 60%;">Display</div>
<div class="a" style="left:1px;top:313px;width:174px;height:4px;background:#ececec"></div>
<svg class="a" style="left:85.5px;top:314px;" width="5" height="3" viewBox="0 0 5 3"><path d="M0 0 H5 L2.5 2.5Z" fill="#111"/></svg>
<div class="a" style="left:0px;top:317px;width:173.5px;height:76px;background:#e2e2e2"></div>
<div class="a" style="left:61.5px;top:322.5px;width:52px;height:65.5px;background:#fff"></div>
<svg class="a" style="left:0;top:0" width="768" height="432" viewBox="0 0 768 432"><g transform="translate(63.5 326.5) scale(0.154 0.15) translate(-229.8 -97.5)"><use href="#fc" style="--sw:4.5"/><use href="#fc2" style="--sw:4.5"/></g><rect x="57" y="323.5" width="61.5" height="46" fill="none" stroke="#c8283a" stroke-width="1.4"/></svg>
<div class="a" style="left:176px;top:73px;width:3px;height:320px;background:#efefef"></div>
<svg class="a" style="left:176px;top:232px;" width="3" height="5" viewBox="0 0 3 5"><path d="M3 0 V5 L0 2.5Z" fill="#111"/></svg>
<div class="a" style="left:188.6px;top:76px;width:392.4px;height:9px;background:#fff"></div>
<div class="a" style="left:188px;top:84px;width:393px;height:1px;background:#a0a0a0"></div>
<div class="a" style="left:188.6px;top:76px;width:392.4px;height:1px;background:#d8d8d8"></div>
<div class="t" style="left:179.8px;top:77.75px;font-size:5.3px;color:#333;font-weight:normal;transform:scaleY(1.12);transform-origin:0 60%;">mm</div>
<svg class="a" style="left:0px;top:0px;position:absolute;left:0;top:0" width="768" height="432" viewBox="0 0 768 432"><g stroke="#888" stroke-width="0.7"><path d="M192.34 82.5 V85"/><path d="M198.63 81.5 V85"/><path d="M204.92 82.5 V85"/><path d="M211.21 82.5 V85"/><path d="M217.50 76 V85"/><path d="M223.79 82.5 V85"/><path d="M230.08 82.5 V85"/><path d="M236.37 81.5 V85"/><path d="M242.66 82.5 V85"/><path d="M248.95 82.5 V85"/><path d="M255.24 76 V85"/><path d="M261.53 82.5 V85"/><path d="M267.82 82.5 V85"/><path d="M274.11 81.5 V85"/><path d="M280.40 82.5 V85"/><path d="M286.69 82.5 V85"/><path d="M292.98 76 V85"/><path d="M299.27 82.5 V85"/><path d="M305.56 82.5 V85"/><path d="M311.85 81.5 V85"/><path d="M318.14 82.5 V85"/><path d="M324.43 82.5 V85"/><path d="M330.72 76 V85"/><path d="M337.01 82.5 V85"/><path d="M343.30 82.5 V85"/><path d="M349.59 81.5 V85"/><path d="M355.88 82.5 V85"/><path d="M362.17 82.5 V85"/><path d="M368.46 76 V85"/><path d="M374.75 82.5 V85"/><path d="M381.04 82.5 V85"/><path d="M387.33 81.5 V85"/><path d="M393.62 82.5 V85"/><path d="M399.91 82.5 V85"/><path d="M406.20 76 V85"/><path d="M412.49 82.5 V85"/><path d="M418.78 82.5 V85"/><path d="M425.07 81.5 V85"/><path d="M431.36 82.5 V85"/><path d="M437.65 82.5 V85"/><path d="M443.94 76 V85"/><path d="M450.23 82.5 V85"/><path d="M456.52 82.5 V85"/><path d="M462.81 81.5 V85"/><path d="M469.10 82.5 V85"/><path d="M475.39 82.5 V85"/><path d="M481.68 76 V85"/><path d="M487.97 82.5 V85"/><path d="M494.26 82.5 V85"/><path d="M500.55 81.5 V85"/><path d="M506.84 82.5 V85"/><path d="M513.13 82.5 V85"/><path d="M519.42 76 V85"/><path d="M525.71 82.5 V85"/><path d="M532.00 82.5 V85"/><path d="M538.29 81.5 V85"/><path d="M544.58 82.5 V85"/><path d="M550.87 82.5 V85"/><path d="M557.16 76 V85"/><path d="M563.45 82.5 V85"/><path d="M569.74 82.5 V85"/><path d="M576.03 81.5 V85"/></g></svg>
<div class="t" style="left:218.8px;top:77.00px;font-size:5.2px;color:#333;font-weight:normal;transform:scaleY(1.12);transform-origin:0 60%;">0</div>
<div class="t" style="left:256.54px;top:77.00px;font-size:5.2px;color:#333;font-weight:normal;transform:scaleY(1.12);transform-origin:0 60%;">20</div>
<div class="t" style="left:294.28000000000003px;top:77.00px;font-size:5.2px;color:#333;font-weight:normal;transform:scaleY(1.12);transform-origin:0 60%;">40</div>
<div class="t" style="left:332.02000000000004px;top:77.00px;font-size:5.2px;color:#333;font-weight:normal;transform:scaleY(1.12);transform-origin:0 60%;">60</div>
<div class="t" style="left:369.76000000000005px;top:77.00px;font-size:5.2px;color:#333;font-weight:normal;transform:scaleY(1.12);transform-origin:0 60%;">80</div>
<div class="t" style="left:407.5px;top:77.00px;font-size:5.2px;color:#333;font-weight:normal;transform:scaleY(1.12);transform-origin:0 60%;">100</div>
<div class="t" style="left:445.24px;top:77.00px;font-size:5.2px;color:#333;font-weight:normal;transform:scaleY(1.12);transform-origin:0 60%;">120</div>
<div class="t" style="left:482.98px;top:77.00px;font-size:5.2px;color:#333;font-weight:normal;transform:scaleY(1.12);transform-origin:0 60%;">140</div>
<div class="t" style="left:520.72px;top:77.00px;font-size:5.2px;color:#333;font-weight:normal;transform:scaleY(1.12);transform-origin:0 60%;">160</div>
<div class="t" style="left:558.46px;top:77.00px;font-size:5.2px;color:#333;font-weight:normal;transform:scaleY(1.12);transform-origin:0 60%;">180</div>
<div class="a" style="left:179px;top:85px;width:9px;height:296px;background:#fff;border-left:1px solid #d0d0d0"></div>
<div class="a" style="left:187.3px;top:85px;width:0.8px;height:296px;background:#a0a0a0"></div>
<svg class="a" style="left:0px;top:0px;position:absolute;left:0;top:0" width="768" height="432" viewBox="0 0 768 432"><g stroke="#888" stroke-width="0.7"><path d="M185.5 92.08 H188"/><path d="M184 98.37 H188"/><path d="M185.5 104.66 H188"/><path d="M185.5 110.95 H188"/><path d="M179 117.24 H188"/><path d="M185.5 123.53 H188"/><path d="M185.5 129.82 H188"/><path d="M184 136.11 H188"/><path d="M185.5 142.40 H188"/><path d="M185.5 148.69 H188"/><path d="M179 154.98 H188"/><path d="M185.5 161.27 H188"/><path d="M185.5 167.56 H188"/><path d="M184 173.85 H188"/><path d="M185.5 180.14 H188"/><path d="M185.5 186.43 H188"/><path d="M179 192.72 H188"/><path d="M185.5 199.01 H188"/><path d="M185.5 205.30 H188"/><path d="M184 211.59 H188"/><path d="M185.5 217.88 H188"/><path d="M185.5 224.17 H188"/><path d="M179 230.46 H188"/><path d="M185.5 236.75 H188"/><path d="M185.5 243.04 H188"/><path d="M184 249.33 H188"/><path d="M185.5 255.62 H188"/><path d="M185.5 261.91 H188"/><path d="M179 268.20 H188"/><path d="M185.5 274.49 H188"/><path d="M185.5 280.78 H188"/><path d="M184 287.07 H188"/><path d="M185.5 293.36 H188"/><path d="M185.5 299.65 H188"/><path d="M179 305.94 H188"/><path d="M185.5 312.23 H188"/><path d="M185.5 318.52 H188"/><path d="M184 324.81 H188"/><path d="M185.5 331.10 H188"/><path d="M185.5 337.39 H188"/><path d="M179 343.68 H188"/><path d="M185.5 349.97 H188"/><path d="M185.5 356.26 H188"/><path d="M184 362.55 H188"/><path d="M185.5 368.84 H188"/><path d="M185.5 375.13 H188"/></g></svg>
<div class="t" style="left:179.2px;top:119.44px;font-size:5.2px;color:#333;writing-mode:vertical-rl;">20</div>
<div class="t" style="left:179.2px;top:157.18px;font-size:5.2px;color:#333;writing-mode:vertical-rl;">40</div>
<div class="t" style="left:179.2px;top:194.92px;font-size:5.2px;color:#333;writing-mode:vertical-rl;">60</div>
<div class="t" style="left:179.2px;top:232.66px;font-size:5.2px;color:#333;writing-mode:vertical-rl;">80</div>
<div class="t" style="left:179.2px;top:270.40px;font-size:5.2px;color:#333;writing-mode:vertical-rl;">100</div>
<div class="t" style="left:179.2px;top:308.14px;font-size:5.2px;color:#333;writing-mode:vertical-rl;">120</div>
<div class="t" style="left:179.2px;top:345.88px;font-size:5.2px;color:#333;writing-mode:vertical-rl;">140</div>
<div class="a" style="left:188px;top:85px;width:393px;height:296px;background:#e1e1e1"></div>
<div class="a" style="left:212.5px;top:85px;width:4px;height:296px;background:linear-gradient(90deg,rgba(0,0,0,0),rgba(0,0,0,0.16))"></div>
<div class="a" style="left:553px;top:85px;width:5px;height:296px;background:linear-gradient(90deg,rgba(0,0,0,0.13),rgba(0,0,0,0))"></div>
<div class="a" style="left:216.3px;top:85px;width:337px;height:296px;background:#fff;border-left:0.8px solid #a8a8a8;border-right:0.6px solid #b8b8b8"></div>
<div class="a" style="left:581px;top:73px;width:12px;height:320px;background:#efefef"></div>
<div class="a" style="left:581.5px;top:85px;width:12px;height:296px;background:#efefef"></div>
<div class="a" style="left:581.7px;top:103px;width:7px;height:187px;background:#cbcbcb"></div>
<svg class="a" style="left:583px;top:88px;" width="5" height="3" viewBox="0 0 5 3"><path d="M0.5 2.5 L2.5 0.5 L4.5 2.5" fill="none" stroke="#333" stroke-width="0.9"/></svg>
<svg class="a" style="left:583px;top:377px;" width="5" height="3" viewBox="0 0 5 3"><path d="M0.5 0.5 L2.5 2.5 L4.5 0.5" fill="none" stroke="#333" stroke-width="0.9"/></svg>
<svg class="a" style="left:589px;top:231.5px;" width="3" height="5" viewBox="0 0 3 5"><path d="M0 0 V5 L3 2.5Z" fill="#111"/></svg>
<div class="a" style="left:179px;top:381px;width:402px;height:12px;background:#efefef"></div>
<div class="a" style="left:180px;top:383.3px;width:46px;height:8.5px;background:#e4eef8;border:1px solid #7fa3cf"></div>
<div class="t" style="left:181.5px;top:384.85px;font-size:5.5px;color:#222;font-weight:normal;transform:scaleY(1.12);transform-origin:0 60%;">Simple Flowchart</div>
<div class="t" style="left:231px;top:384.85px;font-size:5.5px;color:#222;font-weight:normal;transform:scaleY(1.12);transform-origin:0 60%;">All</div>
<svg class="a" style="left:238.5px;top:386px;" width="4" height="3" viewBox="0 0 4 3"><path d="M0 2.6 H4 L2 0.2Z" fill="#222"/></svg>
<div class="a" style="left:248.7px;top:383.5px;width:8px;height:8px;border-radius:50%;background:#3aaa8a"></div>
<svg class="a" style="left:249px;top:384px;" width="8" height="8" viewBox="0 0 8 8"><path d="M4 1.8 V6.2 M1.8 4 H6.2" stroke="#fff" stroke-width="1.3"/></svg>
<div class="t" style="left:260px;top:384.85px;font-size:5.5px;color:#222;font-weight:normal;transform:scaleY(1.12);transform-origin:0 60%;">Add</div>
<svg class="a" style="left:0;top:0;overflow:hidden;clip-path:inset(85px 187px 51px 217px)" width="768" height="432" viewBox="0 0 768 432" font-family="Liberation Sans"><defs><g id="fc"><defs><pattern id="hatch" width="2.6" height="2.6" patternUnits="userSpaceOnUse" patternTransform="rotate(45)"><rect width="2.6" height="2.6" fill="#fff"/><rect width="0.9" height="2.6" fill="#e8e8e8"/></pattern><pattern id="hatch2" width="2.6" height="2.6" patternUnits="userSpaceOnUse" patternTransform="rotate(45)"><rect width="0.9" height="2.6" fill="#c8ccd0" opacity="0.5"/></pattern></defs><rect x="229" y="91" width="188" height="39" fill="url(#hatch)"/><rect x="241" y="97.5" width="167" height="26" fill="#d6d9dd" stroke="#b8bcc0" stroke-width="0.6"/><rect x="241" y="97.5" width="167" height="26" fill="url(#hatch2)"/><text x="324.5" y="115.2" font-size="12" fill="#7b8085" text-anchor="middle">Simple Flowchart</text><path d="M360 180 L360 207.5" fill="none" stroke="#7f7f7f" style="stroke-width:var(--sw,0.9)"/><path d="M358.4 204.9 L360 207.5 L361.6 204.9" fill="#fff" stroke="#7f7f7f" stroke-width="0.6"/><path d="M323 226 L267.8 226 L267.8 272" fill="none" stroke="#7f7f7f" style="stroke-width:var(--sw,0.9)"/><path d="M266.2 269.4 L267.8 272 L269.40000000000003 269.4" fill="#fff" stroke="#7f7f7f" stroke-width="0.6"/><rect x="296.75" y="222.5" width="11.5" height="7" fill="#fff"/><text x="302.5" y="228.2" font-size="6.5" fill="#6a7888" text-anchor="middle">Yes</text><path d="M397 226 L452.4 226 L452.4 273" fill="none" stroke="#7f7f7f" style="stroke-width:var(--sw,0.9)"/><path d="M450.79999999999995 270.4 L452.4 273 L454.0 270.4" fill="#fff" stroke="#7f7f7f" stroke-width="0.6"/><rect x="413.5" y="222.5" width="9" height="7" fill="#fff"/><text x="418" y="228.2" font-size="6.5" fill="#6a7888" text-anchor="middle">No</text><path d="M304 291 L310 291 L310 421 L305 421" fill="none" stroke="#7f7f7f" style="stroke-width:var(--sw,0.9)"/><rect x="305.5" y="310.5" width="9" height="7" fill="#fff"/><text x="310" y="316.2" font-size="6.5" fill="#6a7888" text-anchor="middle">No</text><path d="M267.5 309 L267.5 337" fill="none" stroke="#7f7f7f" style="stroke-width:var(--sw,0.9)"/><path d="M265.9 334.4 L267.5 337 L269.1 334.4" fill="#fff" stroke="#7f7f7f" stroke-width="0.6"/><rect x="261.75" y="320.5" width="11.5" height="7" fill="#fff"/><text x="267.5" y="326.2" font-size="6.5" fill="#6a7888" text-anchor="middle">Yes</text><path d="M415.5 291 L402.4 291 L402.4 337" fill="none" stroke="#7f7f7f" style="stroke-width:var(--sw,0.9)"/><path d="M400.79999999999995 334.4 L402.4 337 L404.0 334.4" fill="#fff" stroke="#7f7f7f" stroke-width="0.6"/><rect x="396.65" y="305.0" width="11.5" height="7" fill="#fff"/><text x="402.4" y="310.7" font-size="6.5" fill="#6a7888" text-anchor="middle">Yes</text><path d="M489 291 L501.7 291 L501.7 337" fill="none" stroke="#7f7f7f" style="stroke-width:var(--sw,0.9)"/><path d="M500.09999999999997 334.4 L501.7 337 L503.3 334.4" fill="#fff" stroke="#7f7f7f" stroke-width="0.6"/><rect x="497.2" y="305.0" width="9" height="7" fill="#fff"/><text x="501.7" y="310.7" font-size="6.5" fill="#6a7888" text-anchor="middle">No</text><path d="M440.6 355.6 L464.2 355.6" fill="none" stroke="#7f7f7f" style="stroke-width:var(--sw,0.9)"/><path d="M452.4 355.6 L452.4 405" fill="none" stroke="#7f7f7f" style="stroke-width:var(--sw,0.9)"/><rect x="322" y="142.5" width="76" height="37.5" rx="18.75" fill="#2ecc71"/><text x="360" y="160.01" font-size="6.7" fill="#1d4d2e" text-anchor="middle" letter-spacing="0">Press computer's</text><text x="360" y="167.81" font-size="6.7" fill="#1d4d2e" text-anchor="middle" letter-spacing="0">start button</text><path d="M360 207.8 L397.6 226 L360 244.4 L322.5 226Z" fill="#e67e22"/><text x="360" y="221.14" font-size="6.5" fill="#4a2a10" text-anchor="middle" letter-spacing="0.2">Does the</text><text x="360" y="228.94" font-size="6.5" fill="#4a2a10" text-anchor="middle" letter-spacing="0.2">computer turn</text><text x="360" y="236.74" font-size="6.5" fill="#4a2a10" text-anchor="middle" letter-spacing="0.2">on?</text><path d="M267.2 272.5 L304 291 L267.2 309.4 L230.5 291Z" fill="#e67e22"/><text x="267.2" y="289.94" font-size="6.5" fill="#4a2a10" text-anchor="middle" letter-spacing="0.2">Are there any</text><text x="267.2" y="297.74" font-size="6.5" fill="#4a2a10" text-anchor="middle" letter-spacing="0.2">error messages?</text><path d="M452.2 273 L489 291 L452.2 309.4 L415.5 291Z" fill="#e67e22"/><text x="452.2" y="289.94" font-size="6.5" fill="#4a2a10" text-anchor="middle" letter-spacing="0.2">Is the computer</text><text x="452.2" y="297.74" font-size="6.5" fill="#4a2a10" text-anchor="middle" letter-spacing="0.2">power light on?</text><rect x="229.8" y="337" width="75.6" height="37.7" fill="#f1c40f" stroke="#e2b40a" stroke-width="0.5"/><text x="267.6" y="354.91" font-size="6.7" fill="#4a3c0a" text-anchor="middle" letter-spacing="0">Perform a search for</text><text x="267.6" y="362.31" font-size="6.7" fill="#4a3c0a" text-anchor="middle" letter-spacing="0">the error message</text><rect x="364.9" y="337" width="75.7" height="37.7" fill="#f1c40f" stroke="#e2b40a" stroke-width="0.5"/><text x="402.75" y="354.91" font-size="6.7" fill="#4a3c0a" text-anchor="middle" letter-spacing="0">Turn the computer</text><text x="402.75" y="362.31" font-size="6.7" fill="#4a3c0a" text-anchor="middle" letter-spacing="0">monitor on</text><rect x="464.2" y="337" width="75.7" height="37.7" fill="#f1c40f" stroke="#e2b40a" stroke-width="0.5"/><text x="502.04999999999995" y="354.91" font-size="6.7" fill="#4a3c0a" text-anchor="middle" letter-spacing="0">Check the computer</text><text x="502.04999999999995" y="362.31" font-size="6.7" fill="#4a3c0a" text-anchor="middle" letter-spacing="0">power cord</text></g><g id="fc2"><path d="M310 420 L305 420" stroke="#7f7f7f"/><rect x="230" y="399" width="75" height="44" rx="22" fill="#2ecc71"/><path d="M452 405 L493 423 L452 441 L411 423Z" fill="#e67e22"/><path d="M411 423 H402 V447 M493 423 H502 V447" fill="none" stroke="#6f6f6f" style="stroke-width:var(--sw,0.9)"/><rect x="364.5" y="447.5" width="77" height="45.5" rx="22.75" fill="#2ecc71"/><rect x="464" y="447.5" width="80" height="45.5" rx="22.75" fill="#2ecc71"/></g></defs><use href="#fc"/></svg>
<div class="a" style="left:593px;top:73px;width:175px;height:320px;background:#efefef"></div>
<div class="a" style="left:594px;top:87.5px;width:172px;height:304.5px;background:#fff;border:1px solid #a8a8a8"></div>
<div class="a" style="left:623px;top:77.5px;width:29.5px;height:10.5px;background:#ececec;border:1px solid #c4c4c4;border-bottom:none"></div>
<div class="a" style="left:652px;top:77.5px;width:16.5px;height:10.5px;background:#ececec;border:1px solid #c4c4c4;border-bottom:none"></div>
<div class="a" style="left:594px;top:76.3px;width:29.5px;height:12px;background:#fff;border:1px solid #a8a8a8;border-bottom:none"></div>
<div class="t" style="left:595.6px;top:78.90px;font-size:5.4px;color:#222;font-weight:normal;transform:scaleY(1.12);transform-origin:0 60%;">Properties</div>
<div class="t" style="left:625.6px;top:79.90px;font-size:5.4px;color:#222;font-weight:normal;transform:scaleY(1.12);transform-origin:0 60%;">Geometry</div>
<div class="t" style="left:655px;top:79.90px;font-size:5.4px;color:#222;font-weight:normal;transform:scaleY(1.12);transform-origin:0 60%;">Text</div>
<div class="a" style="left:595.5px;top:88.8px;width:170px;height:11.5px;background:linear-gradient(#efefef,#e2e2e2);border-bottom:1px solid #d0d0d0"></div>
<svg class="a" style="left:600px;top:92.5px;" width="3.5" height="4" viewBox="0 0 3.5 4"><path d="M0 0 V4 L3.5 2Z" fill="#111"/></svg>
<svg class="a" style="left:607.5px;top:90.5px;" width="8" height="8" viewBox="0 0 8 8"><circle cx="4" cy="4" r="2.6" fill="#e6f2fc" stroke="#6aa4d8" stroke-width="0.7"/><path d="M4 0 V1.6 M4 6.4 V8 M0 4 H1.6 M6.4 4 H8" stroke="#4a8ac8" stroke-width="0.7"/></svg>
<div class="t" style="left:617.8px;top:91.85px;font-size:5.5px;color:#222;font-weight:normal;transform:scaleY(1.12);transform-origin:0 60%;">Size and Position</div>
<div class="a" style="left:0px;top:393px;width:768px;height:19px;background:#fbfbfb"></div>
<div class="t" style="left:5px;top:401.05px;font-size:5.5px;color:#333;font-weight:normal;transform:scaleY(1.12);transform-origin:0 60%;">PAGE 1 OF 1</div>
<div class="a" style="left:42.5px;top:395px;width:0.7px;height:16px;background:#dedede"></div>
<div class="a" style="left:49.5px;top:395px;width:0.7px;height:16px;background:#dedede"></div>
<svg class="a" style="left:612px;top:400px;" width="8" height="8" viewBox="0 0 8 8"><rect x="0.5" y="0.5" width="7" height="5" fill="none" stroke="#6a8eae" stroke-width="0.8"/><path d="M4 5.5 V7.5 M2 7.5 H6" stroke="#6a8eae" stroke-width="0.8"/></svg>
<svg class="a" style="left:624px;top:399px;" width="8" height="8" viewBox="0 0 8 8"><circle cx="4" cy="4" r="3.4" fill="none" stroke="#888" stroke-width="0.7"/><path d="M2 4 H6" stroke="#888" stroke-width="0.8"/></svg>
<div class="a" style="left:640px;top:402px;width:75px;height:2px;background:#e2e2e2"></div>
<svg class="a" style="left:674.5px;top:396px;" width="6" height="12" viewBox="0 0 6 12"><path d="M0.5 0.5 H5.5 V8 L3 11 L0.5 8Z" fill="#eeeeee" stroke="#b4b4b4" stroke-width="0.8"/></svg>
<div class="a" style="left:639.5px;top:407px;width:0.7px;height:1.5px;background:#777"></div>
<div class="a" style="left:714.5px;top:407px;width:0.7px;height:1.5px;background:#777"></div>
<svg class="a" style="left:722px;top:399px;" width="8" height="8" viewBox="0 0 8 8"><circle cx="4" cy="4" r="3.4" fill="none" stroke="#888" stroke-width="0.7"/><path d="M2 4 H6 M4 2 V6" stroke="#888" stroke-width="0.8"/></svg>
<div class="t" style="left:737px;top:400.70px;font-size:5.2px;color:#222;font-weight:normal;transform:scaleY(1.12);transform-origin:0 60%;">100%</div>
<svg class="a" style="left:756.5px;top:397.5px;" width="9" height="9" viewBox="0 0 9 9"><rect x="0.5" y="0.5" width="8" height="8" fill="none" stroke="#999" stroke-width="0.7"/><path d="M1.5 1.5 L3 3 M6.5 1.5 L5 3 M1.5 6.5 L3 5 M6.5 6.5 L5 5" stroke="#999" stroke-width="0.7"/></svg>
<div class="a" style="left:0px;top:412px;width:768px;height:20px;background:linear-gradient(90deg,#1c3a55 0%,#1a3752 45%,#112c46 52%,#0f2a44 100%)"></div>
<div class="a" style="left:0px;top:412px;width:24px;height:20px;background:#0f2740"></div>
<svg class="a" style="left:8px;top:418px;" width="8" height="8" viewBox="0 0 8 8"><path d="M0 0.8 L3.5 0.3 V3.6 H0Z M4.2 0.2 L8 -0.3 V3.6 H4.2Z M0 4.4 H3.5 V7.7 L0 7.2Z M4.2 4.4 H8 V8.3 L4.2 7.8Z" fill="#fff"/></svg>
<div class="a" style="left:24px;top:412px;width:172px;height:20px;background:#3a5870"></div>
<svg class="a" style="left:29px;top:416px;" width="10" height="11" viewBox="0 0 10 11"><circle cx="6" cy="4" r="3" fill="none" stroke="#dde6ee" stroke-width="0.9"/><path d="M3.8 6.2 L0.8 10" stroke="#dde6ee" stroke-width="0.9"/></svg>
<div class="t" style="left:44px;top:418.40px;font-size:7.2px;color:#dbe3ea;font-weight:normal;">Search</div>
<svg class="a" style="left:204px;top:417.5px;" width="9" height="9" viewBox="0 0 9 9"><path d="M0.5 0.5 V8 M0.5 1 H6 M0.5 7.5 H6 M6 0.5 V2 M6 6.5 V8 M8 0.5 V8" fill="none" stroke="#dde4ea" stroke-width="1"/><rect x="1" y="3.5" width="5" height="1.5" fill="#dde4ea" opacity="0.8"/></svg>
<div class="a" style="left:221.5px;top:417px;width:0.7px;height:10px;background:#56708a"></div>
<svg class="a" style="left:238px;top:415px;" width="6" height="13" viewBox="0 0 6 13"><rect x="0.5" y="0.5" width="5" height="12" rx="1" fill="#c8ccd0"/><rect x="1.2" y="2" width="3.6" height="7" fill="#8a9098"/></svg>
<div class="a" style="left:260.5px;top:416px;width:11.5px;height:11.5px;border-radius:50%;border:2px solid #b81e44;background:#4a2040"></div>
<div class="a" style="left:264px;top:418.3px;width:4.5px;height:7px;border-radius:50%;border:1px solid #c03050"></div>
<svg class="a" style="left:285px;top:416px;" width="12" height="11" viewBox="0 0 12 11"><rect x="0.5" y="2.5" width="11" height="8" fill="#e8b84a"/><rect x="0.5" y="1" width="5" height="2" fill="#d8a030"/><rect x="2" y="6" width="8" height="3" fill="#4aa0d8"/></svg>
<svg class="a" style="left:310px;top:415.5px;" width="12" height="12" viewBox="0 0 12 12"><circle cx="6" cy="6" r="5.5" fill="#db4437"/><path d="M6 6 L11.2 4 A5.5 5.5 0 0 1 3 10.8Z" fill="#f4b400"/><path d="M6 6 L3 10.8 A5.5 5.5 0 0 1 0.6 4Z" fill="#0f9d58"/><circle cx="6" cy="6" r="2.3" fill="#fff"/><circle cx="6" cy="6" r="1.7" fill="#4285f4"/></svg>
<svg class="a" style="left:332.5px;top:416.5px;" width="13" height="10" viewBox="0 0 13 10"><path d="M0.3 9.5 L2.5 0.5 H4.5 L6.5 4.5 L8.5 0.5 H10.5 L12.7 9.5 H9.7 L8.8 5 L6.5 8.5 L4.2 5 L3.3 9.5Z" fill="#1c44d0"/></svg>
<div class="a" style="left:360px;top:416px;width:11px;height:11px;border-radius:50%;background:#1ed760"></div>
<svg class="a" style="left:361px;top:418px;" width="9" height="7" viewBox="0 0 9 7"><path d="M1.5 2 Q4.5 0.8 7.5 2.4 M2 3.8 Q4.5 2.8 7 4.2 M2.5 5.5 Q4.5 4.8 6.5 5.8" fill="none" stroke="#10301a" stroke-width="0.9"/></svg>
<div class="a" style="left:283px;top:430.5px;width:17px;height:1.5px;background:#9dc4e8"></div>
<div class="a" style="left:308px;top:430.5px;width:17px;height:1.5px;background:#9dc4e8"></div>
<div class="a" style="left:331px;top:430.5px;width:17px;height:1.5px;background:#9dc4e8"></div>
<div class="a" style="left:357px;top:430.5px;width:17px;height:1.5px;background:#9dc4e8"></div>
<div class="a" style="left:378.5px;top:412px;width:24px;height:20px;background:#1d5f9a"></div>
<div class="a" style="left:378.5px;top:430.5px;width:24px;height:1.5px;background:#9dc4e8"></div>
<svg class="a" style="left:384px;top:415px;" width="12" height="12" viewBox="0 0 12 12"><path d="M6 1 L9 4 L6 7 L3 4Z" fill="#cfe4f6"/><circle cx="2.5" cy="5.5" r="1.8" fill="#a8d0f0"/><circle cx="9.5" cy="5.5" r="1.8" fill="#a8d0f0"/><rect x="5.5" y="7" width="1" height="4" fill="#cfe4f6"/></svg>
<div class="a" style="left:527px;top:416px;width:0.8px;height:12px;background:#4a6078"></div>
<div class="t" style="left:533px;top:415.60px;font-size:6px;color:#f0f0f0;font-weight:bold;transform:scaleY(1.12);transform-origin:0 60%;font-family:Liberation Serif">Upload:</div>
<div class="t" style="left:533px;top:422.30px;font-size:6px;color:#f0f0f0;font-weight:bold;transform:scaleY(1.12);transform-origin:0 60%;font-family:Liberation Serif">Download:</div>
<div class="t" style="right:162.5px;top:415.30px;font-size:6.6px;color:#f0f0f0;font-weight:bold;font-family:Liberation Serif">0.00 kB/s</div>
<div class="t" style="right:162.5px;top:422.00px;font-size:6.6px;color:#f0f0f0;font-weight:bold;font-family:Liberation Serif">0.19 kB/s</div>
<svg class="a" style="left:610px;top:419px;" width="6" height="4" viewBox="0 0 6 4"><path d="M0.5 3.5 L3 1 L5.5 3.5" fill="none" stroke="#e8eef4" stroke-width="0.9"/></svg>
<svg class="a" style="left:621px;top:418px;" width="9" height="8" viewBox="0 0 9 8"><rect x="0.5" y="1.5" width="7" height="5.5" fill="none" stroke="#e8eef4" stroke-width="0.8"/><rect x="3" y="3.5" width="6" height="4.5" fill="#3cc060"/></svg>
<svg class="a" style="left:633px;top:417px;" width="9" height="9" viewBox="0 0 9 9"><path d="M1 8 Q1 1 8 1 M3 8 Q3 3 8 3 M5 8 Q5 5 8 5" fill="none" stroke="#e0e6ec" stroke-width="0.8"/></svg>
<svg class="a" style="left:644px;top:417px;" width="10" height="9" viewBox="0 0 10 9"><path d="M0.5 3 H2.5 L5 0.8 V8.2 L2.5 6 H0.5Z" fill="none" stroke="#e8eef4" stroke-width="0.8"/><path d="M6.5 2.5 Q8 4.5 6.5 6.5 M8 1 Q10.2 4.5 8 8" fill="none" stroke="#e8eef4" stroke-width="0.7"/></svg>
<svg class="a" style="left:657px;top:416.5px;" width="10" height="10" viewBox="0 0 10 10"><path d="M1 9 L4 6 M6 4 L9 1 M2.5 5 L5 7.5 M5 2.5 L7.5 5" stroke="#e0e6ec" stroke-width="1.1"/></svg>
<svg class="a" style="left:671px;top:417.5px;" width="15" height="9" viewBox="0 0 15 9"><rect x="0.5" y="0.5" width="14" height="8" fill="none" stroke="#d0d8e0" stroke-width="0.8"/><path d="M3 6 H12" stroke="#d0d8e0" stroke-width="0.7"/></svg>
<div class="t" style="left:689px;top:419.00px;font-size:6px;color:#f0f0f0;font-weight:normal;transform:scaleY(1.12);transform-origin:0 60%;">ENG</div>
<div class="t" style="left:622.8px;width:200px;text-align:center;top:414.80px;font-size:6px;color:#f0f0f0;font-weight:normal;transform:scaleY(1.12);transform-origin:0 60%;">7:14 PM</div>
<div class="t" style="left:623.2px;width:200px;text-align:center;top:423.00px;font-size:6px;color:#f0f0f0;font-weight:normal;transform:scaleY(1.12);transform-origin:0 60%;">22/11/2020</div>
<svg class="a" style="left:746px;top:416px;" width="13" height="12" viewBox="0 0 13 12"><path d="M1 1 H10 V8 H5 L3 10 V8 H1Z" fill="#e8eef4"/><path d="M2.5 3 H8.5 M2.5 5 H8.5" stroke="#3a5870" stroke-width="0.6"/></svg>
<div class="a" style="left:753px;top:422.5px;width:7.5px;height:7.5px;border-radius:50%;background:#2b7fd4;border:0.8px solid #fff"></div>
<div class="t" style="left:656.8px;width:200px;text-align:center;top:423.80px;font-size:5px;color:#fff;font-weight:bold;transform:scaleY(1.12);transform-origin:0 60%;">2</div>


</body></html>
